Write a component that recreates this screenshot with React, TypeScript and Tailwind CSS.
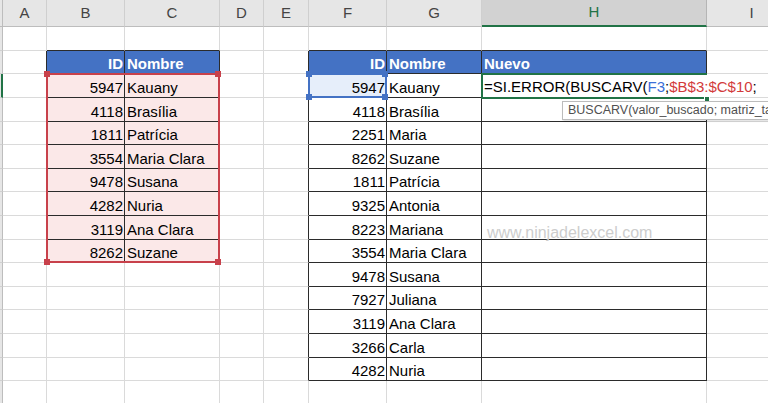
import React from "react";

const COLS = [
  { k: "A", w: "w-[44px]" },
  { k: "B", w: "w-[78px]" },
  { k: "C", w: "w-[95px]" },
  { k: "D", w: "w-[44px]" },
  { k: "E", w: "w-[45px]" },
  { k: "F", w: "w-[78px]" },
  { k: "G", w: "w-[95px]" },
  { k: "H", w: "w-[225px]" },
  { k: "I", w: "w-[90px]" },
];

const ROWS = [
  "h-[24px]", "h-[23px]", "h-[24px]", "h-[24px]", "h-[23px]", "h-[24px]", "h-[23px]", "h-[24px]",
  "h-[24px]", "h-[23px]", "h-[24px]", "h-[23px]", "h-[24px]", "h-[24px]", "h-[23px]", "h-[24px]", "h-[24px]",
];

const LEFT: [string, string][] = [
  ["5947", "Kauany"], ["4118", "Brasília"], ["1811", "Patrícia"], ["3554", "Maria Clara"],
  ["9478", "Susana"], ["4282", "Nuria"], ["3119", "Ana Clara"], ["8262", "Suzane"],
];

const RIGHT: [string, string][] = [
  ["5947", "Kauany"], ["4118", "Brasília"], ["2251", "Maria"], ["8262", "Suzane"],
  ["1811", "Patrícia"], ["9325", "Antonia"], ["8223", "Mariana"], ["3554", "Maria Clara"],
  ["9478", "Susana"], ["7927", "Juliana"], ["3119", "Ana Clara"], ["3266", "Carla"], ["4282", "Nuria"],
];

function inTable(r: number, c: number) {
  if (r >= 2 && r <= 10 && (c === 1 || c === 2)) return true;
  if (r >= 2 && r <= 15 && (c === 5 || c === 6 || c === 7)) return true;
  return false;
}

function cellContent(r: number, c: number): { text: string; align: "l" | "r" } | null {
  if (r === 2) {
    if (c === 1 || c === 5) return { text: "ID", align: "r" };
    if (c === 2 || c === 6) return { text: "Nombre", align: "l" };
    if (c === 7) return { text: "Nuevo", align: "l" };
  }
  if (r >= 3 && r <= 10 && (c === 1 || c === 2)) {
    const d = LEFT[r - 3];
    return c === 1 ? { text: d[0], align: "r" } : { text: d[1], align: "l" };
  }
  if (r >= 3 && r <= 15 && (c === 5 || c === 6)) {
    const d = RIGHT[r - 3];
    return c === 5 ? { text: d[0], align: "r" } : { text: d[1], align: "l" };
  }
  return null;
}

function Corner({ x, y, color }: { x: number; y: number; color: "red" | "blue" }) {
  return (
    <div
      className={
        "absolute w-[6px] h-[6px] " + (color === "red" ? "bg-[#c8414b]" : "bg-[#4472c4]")
      }
      style={{ left: x - 3, top: y - 3 }}
    />
  );
}

export default function App() {
  return (
    <div className="relative w-[768px] h-[403px] overflow-hidden bg-white font-['Liberation_Sans',Arial,sans-serif] text-black">
      {/* column header row */}
      <div className="flex h-[27px]">
        <div className="w-[3px] shrink-0 bg-[#e6e6e6] border-r border-r-[#bdbdbd] border-b border-b-[#bdbdbd]" />
        {COLS.map((col) => {
          const sel = col.k === "H";
          return (
            <div
              key={col.k}
              className={
                "shrink-0 flex items-center justify-center text-[15px] border-r " +
                col.w +
                (sel
                  ? " bg-[#d2d2d2] text-[#217346] border-r-[#b5b5b5] border-b-2 border-b-[#217346]"
                  : " bg-[#e6e6e6] text-[#444444] border-r-[#cfcfcf] border-b border-b-[#bdbdbd]")
              }
            >
              {col.k}
            </div>
          );
        })}
      </div>

      {/* rows */}
      {ROWS.map((h, ri) => {
        const r = ri + 1;
        return (
          <div key={r} className={"flex " + h}>
            <div
              className={
                "w-[3px] shrink-0 bg-[#e6e6e6] border-b border-b-[#d0d0d0] " +
                (r === 3 ? "border-r-2 border-r-[#217346]" : "border-r border-r-[#bdbdbd]")
              }
            />
            {COLS.map((col, c) => {
              const t = inTable(r, c);
              const darkR = t || (c + 1 < COLS.length && inTable(r, c + 1));
              const darkB = t || inTable(r + 1, c);
              const content = cellContent(r, c);
              const header = r === 2 && t;
              const pink = r >= 3 && r <= 10 && (c === 1 || c === 2);
              const blueFill = r === 3 && c === 5;
              const bg = header
                ? " bg-[#4472c4] text-white font-bold"
                : pink
                ? " bg-[#fbe8e8]"
                : blueFill
                ? " bg-[#e6eefa]"
                : " bg-white";
              return (
                <div
                  key={col.k}
                  className={
                    "shrink-0 flex items-end pb-[1px] border-r border-b text-[15px] leading-[17px] whitespace-nowrap overflow-hidden " +
                    col.w +
                    (darkR ? " border-r-[#2b2b2b]" : " border-r-[#dadada]") +
                    (darkB ? " border-b-[#2b2b2b]" : " border-b-[#dadada]") +
                    bg +
                    (content && content.align === "r" ? " justify-end pr-[1px]" : " justify-start pl-[2px]")
                  }
                >
                  {content ? content.text : null}
                </div>
              );
            })}
          </div>
        );
      })}

      {/* red reference range B3:C10 */}
      <div className="absolute left-[46px] top-[73px] w-[174px] h-[190px] border-2 border-[#c8414b]" />
      <Corner x={47} y={74} color="red" />
      <Corner x={218} y={74} color="red" />
      <Corner x={47} y={262} color="red" />
      <Corner x={218} y={262} color="red" />

      {/* blue reference F3 */}
      <div className="absolute left-[308px] top-[73px] w-[79px] h-[25px] border-2 border-[#4472c4]" />
      <Corner x={309} y={74} color="blue" />
      <Corner x={385} y={74} color="blue" />
      <Corner x={309} y={97} color="blue" />
      <Corner x={385} y={97} color="blue" />

      {/* active editing cell H3 */}
      <div className="absolute left-[483px] top-[75px] w-[274px] h-[22px] bg-white flex items-end pb-[2px] pl-[1px] text-[15px] leading-[17px] whitespace-nowrap">
        <span>=SI.ERROR(BUSCARV(</span>
        <span className="text-[#3a6fd8]">F3</span>
        <span>;</span>
        <span className="text-[#d23a3a]">$B$3:$C$10</span>
        <span>;</span>
        <span className="inline-block w-[1px] h-[17px] bg-black ml-[2px]" />
      </div>
      <div className="absolute left-[481px] top-[73px] w-[226px] h-[26px] border-l-2 border-t-2 border-b-2 border-[#217346]" />
      <div className="absolute left-[704px] top-[96px] w-[6px] h-[6px] bg-[#217346] border border-white" />

      {/* tooltip */}
      <div className="absolute left-[562px] top-[101px] w-[240px] h-[19px] bg-white border border-[#bcbcbc] shadow-[1px_1px_2px_rgba(0,0,0,0.15)] flex items-center pl-[5px] text-[12.5px] text-[#505050] whitespace-nowrap">
        BUSCARV(valor_buscado; matriz_tabla; indicador_columnas; [ordenado])
      </div>

      {/* watermark */}
      <div className="absolute left-[487px] top-[224px] text-[16px] leading-[18px] text-[#cdcdcd] whitespace-nowrap">
        www.ninjadelexcel.com
      </div>
    </div>
  );
}
